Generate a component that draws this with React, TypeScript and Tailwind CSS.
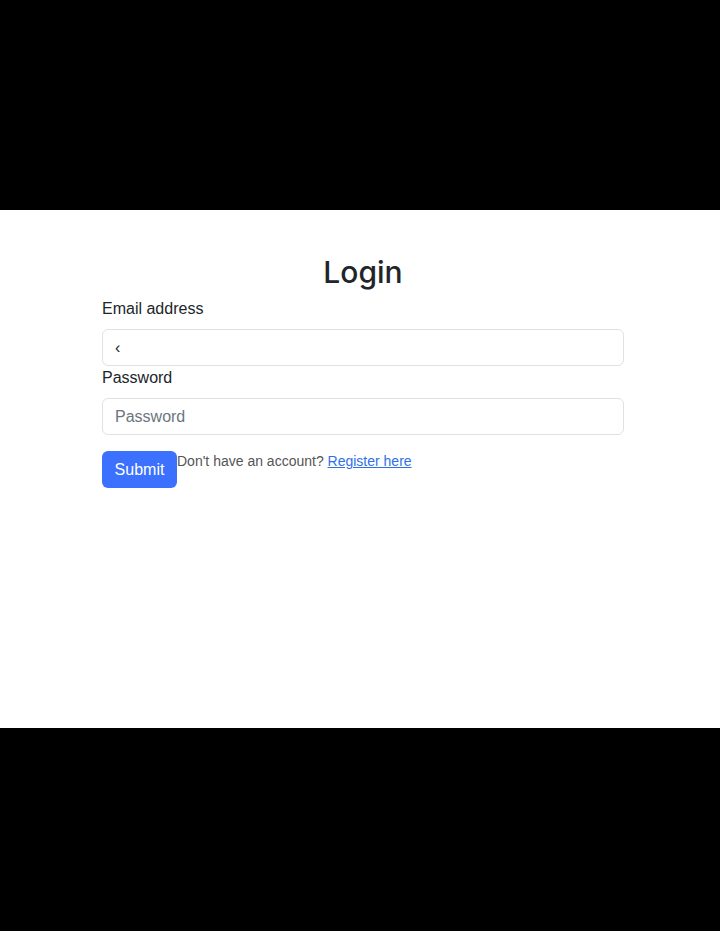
import React from 'react';

const App: React.FC = () => {
  return (
    <div className="min-h-screen bg-black pt-[210px]" style={{ fontFamily: '"Liberation Sans", Arial, sans-serif' }}>
      <div className="h-[518px] bg-white">
        <div className="ml-[102px] w-[522px] pt-[43px]">
          <h2
            className="text-center text-[30px] leading-[38px] font-medium text-[#212529] mb-[6px]"
            style={{ fontFamily: 'Inter, "Liberation Sans", sans-serif' }}
          >
            Login
          </h2>

          <form onSubmit={(e) => e.preventDefault()}>
            <div>
              <label className="block text-[16px] leading-6 text-[#212529] mb-2">Email address</label>
              <input
                type="email"
                defaultValue="‹"
                className="block w-full h-[37px] px-3 text-[16px] text-[#212529] border border-[#dee2e6] rounded-[6px] outline-none"
              />
            </div>
            <div>
              <label className="block text-[16px] leading-6 text-[#212529] mb-2">Password</label>
              <input
                type="password"
                placeholder="Password"
                className="block w-full h-[37px] px-3 text-[16px] text-[#212529] placeholder:text-[#6c757d] border border-[#dee2e6] rounded-[6px] outline-none"
              />
            </div>

            <div className="flex items-start mt-4">
              <button
                type="submit"
                className="h-[37px] w-[75px] rounded-[6px] bg-[#3b71fe] text-white text-[16px]"
              >
                Submit
              </button>
              <span className="text-[14px] leading-[21px] text-[#555]">
                Don't have an account?{' '}
                <a href="#" className="text-[#2f6fe8] underline">Register here</a>
              </span>
            </div>
          </form>
        </div>
      </div>
    </div>
  );
};

export default App;
